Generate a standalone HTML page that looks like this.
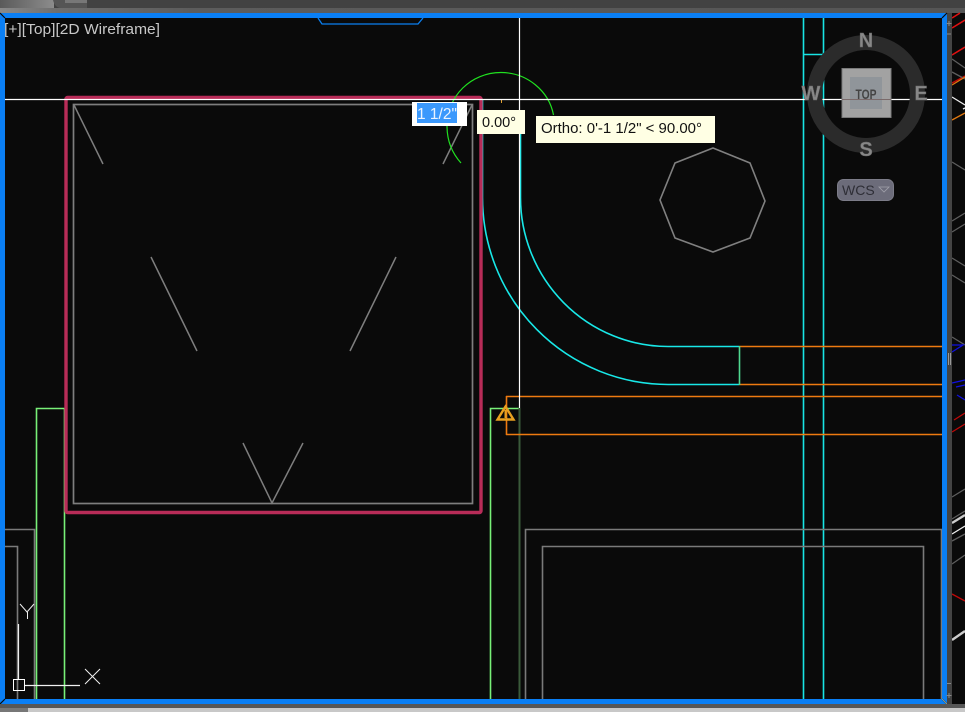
<!DOCTYPE html>
<html><head><meta charset="utf-8"><style>
html,body{margin:0;padding:0;background:#0a0a0a;width:965px;height:712px;overflow:hidden}
svg{display:block}
text{font-family:"Liberation Sans",sans-serif}
</style></head><body>
<svg width="965" height="712" viewBox="0 0 965 712" xmlns="http://www.w3.org/2000/svg">
<defs>
<linearGradient id="t" x1="0" x2="1" y1="0" y2="0"><stop offset="0" stop-color="#8a8a8a"/><stop offset="0.06" stop-color="#6e6e6e"/><stop offset="0.2" stop-color="#5c5c5c"/><stop offset="1" stop-color="#555"/></linearGradient>
<linearGradient id="t2" x1="0" x2="1" y1="0" y2="0"><stop offset="0" stop-color="#5a5a5a"/><stop offset="1" stop-color="#8c8c8c"/></linearGradient>
</defs>
<rect width="965" height="712" fill="#0a0a0a"/>
<!-- top chrome -->
<rect width="965" height="8" fill="#424242"/>
<rect y="0" width="54" height="8" fill="url(#t2)"/>
<path d="M53 0h34v8H61q-6 0-8-8z" fill="#555"/>
<rect x="65" y="0" width="22" height="3" fill="#777"/>
<rect y="8" width="965" height="5" fill="url(#t)"/>
<!-- right black area lines -->
<g fill="none" stroke-width="1.3">
<g stroke="#e01010"><path d="M952 18L960 13M952 28L965 20M952 55L965 47" stroke-width="1.6"/><path d="M952 83L965 76M954 420L965 413M952 432L965 424M952 594L965 601" stroke="#c00808"/></g>
<g stroke="#5e5e5e"><path d="M952 59L965 68M952 72L965 79M952 162L965 170M952 221L965 213M952 232L965 224M952 258L965 266M952 275L965 283M952 337L965 345M952 497L965 489M952 519L965 511M952 541L965 534M952 564L965 555"/></g>
<g stroke="#e07810"><path d="M952 85L965 77M952 120L965 113"/></g>
<g stroke="#eee"><path d="M952 97L965 105M963 109L965 108M952 534L965 526"/><path d="M952 523L965 515M952 640L965 631" stroke-width="2.4" stroke="#ccc"/></g>
<g stroke="#1010e0"><path d="M952 345H963L952 352M952 383L965 380M956 387L965 385M957 395L965 400"/></g>
</g>
<!-- drawing -->
<g fill="none" stroke-width="1.6">
<path d="M803.5 18V699M823.5 18V699M803 54.5H824" stroke="#18e4e4"/>
<path d="M36.500 699V408.500H64.500V699M490.500 699V408.500H519" stroke="#78f078"/>
<path d="M519.500 408V699" stroke="#3a5a3a" stroke-width="2"/>
<path d="M5 529.500H34.500V699M5 546.500H17.500V699" stroke="#7a7a7a"/>
<path d="M525.500 699V529.500H941.500V699M542.500 699V546.500H923.500V699" stroke="#7a7a7a"/>
<path d="M739 346.500H942M739 384.500H942M506 396.500H942M506 434.500H942M506.500 396V435" stroke="#ee7a10"/>
</g>
<path d="M318 18L322 24H418L423 18" stroke="#0a7ff0" fill="none" stroke-width="1.300"/>
<g fill="none">
<path d="M482.500 99V197A186 187 0 0 0 668 384.500H739M520.500 134V197A148 149 0 0 0 668 346.500H739" stroke="#18e8e8" stroke-width="1.600"/>
<path d="M739.500 346V385" stroke="#50d890" stroke-width="1.600"/>
<rect x="66" y="97.500" width="415" height="415" rx="1.500" stroke="#b82c58" stroke-width="3.400"/>
<rect x="73.500" y="104.500" width="399" height="399" stroke="#7e7e7e" stroke-width="1.700"/>
<path d="M74 105L103 164M472 105L443 164M151 257L197 351M396 257L350 351M243 443L272 503L303 443" stroke="#7e7e7e" stroke-width="1.500"/>
<path d="M461 163C452 153 447 140 447 126C447 96 471 72.500 501 72.500C527 72.500 549 91 553.500 115" stroke="#20e020" stroke-width="1.200"/>
<path d="M713 148L750 163L765 201L750 238L713 252L675 238L660 200L675 163Z" stroke="#808080" stroke-width="1.600"/>
</g>
<path d="M501.500 100v3" stroke="#e0a030"/>
<!-- crosshair -->
<path d="M0 99.500H942M519.500 18V408" stroke="#fff" fill="none" stroke-width="1.200"/>
<!-- warning -->
<path d="M505.500 406.500L497.500 419.500H513.500Z" fill="none" stroke="#e8a020" stroke-width="2.400"/>
<path d="M505.500 410v8" stroke="#e8a020" stroke-width="2"/>
<!-- UCS -->
<g fill="none" stroke="#f0f0f0">
<rect x="13.500" y="679.500" width="11" height="11" stroke="#fff"/>
<path d="M18.500 624V679M25 685.500H80" stroke-width="1.200"/>
<path d="M20 604L27 612L34 604M27.500 612V619"/>
<path d="M85 669L100 684M100 669L85 684"/>
</g>
<!-- viewcube -->
<circle cx="866" cy="94" r="51.500" fill="none" stroke="#2b2b2b" stroke-width="15"/>
<rect x="842" y="68.500" width="49" height="49" fill="#a2a2a2" stroke="#7a7a7a"/>
<rect x="850" y="77" width="32" height="32" fill="#90959a"/>
<path d="M842 99.500H891" stroke="#7a6a6a"/>
<text x="866" y="99" text-anchor="middle" font-size="14" font-weight="bold" fill="#444" textLength="21" lengthAdjust="spacingAndGlyphs">TOP</text>
<g font-size="20" font-weight="bold" fill="#888" text-anchor="middle" stroke="#666" stroke-width=".4">
<text x="866" y="47">N</text><text x="811" y="100">W</text><text x="921" y="100">E</text><text x="866" y="156">S</text>
</g>
<rect x="837.500" y="179.500" width="56" height="21" rx="6" fill="#6c6c7a" stroke="#7c7c88"/>
<text x="842" y="195" font-size="14" fill="#2e2e36">WCS</text>
<path d="M879 187h10l-5 5z" fill="#6c6c7a" stroke="#a0a0aa" stroke-width=".8"/>
<!-- label -->
<text x="4" y="34" font-size="15" fill="#c8c8c8" textLength="156" lengthAdjust="spacingAndGlyphs">[+][Top][2D Wireframe]</text>
<!-- tooltips -->
<rect x="412" y="102" width="55" height="24" fill="#fff"/>
<rect x="417" y="103" width="40" height="20" fill="#3a98fc"/>
<text x="417" y="119" font-size="16" fill="#eaf3ff" textLength="40" lengthAdjust="spacingAndGlyphs">1 1/2"</text>
<rect x="477" y="110" width="48" height="24" fill="#ffffe4"/>
<text x="482" y="127" font-size="14.500" fill="#111">0.00°</text>
<rect x="536" y="116" width="179" height="27" fill="#ffffe4"/>
<text x="541" y="133" font-size="14.500" fill="#111" textLength="161" lengthAdjust="spacingAndGlyphs">Ortho: 0'-1 1/2" &lt; 90.00°</text>
<!-- frame -->
<rect x="0" y="13" width="947" height="5" fill="#0a7ff5"/>
<rect x="0" y="13" width="5" height="691" fill="#0a7ff5"/>
<rect x="942" y="13" width="5" height="691" fill="#0a7ff5"/>
<rect x="0" y="699" width="947" height="5" fill="#0a7ff5"/>
<rect x="947" y="13" width="5" height="691" fill="#444"/>
<path d="M0 13L5 18M947 13L942 18M0 704L5 699M942 699L947 704" stroke="#0a0a0a" stroke-width="1.200"/>
<path d="M942 699L947 704" stroke="#cc9" stroke-width=".6"/>
<path d="M946.500 23.500H951.500M949 21V26M947 34H951M947 683.500H951M946.500 695.500H951.500M949 693V698" stroke="#888" fill="none"/>
<path d="M948.500 353V365M950.500 353V365" stroke="#999" fill="none"/>
<!-- bottom -->
<rect y="704" width="965" height="4" fill="#575757"/>
<rect y="708" width="965" height="4" fill="#c8c8c8"/>
<rect y="708" width="28" height="4" fill="#777"/>
</svg>
</body></html>
